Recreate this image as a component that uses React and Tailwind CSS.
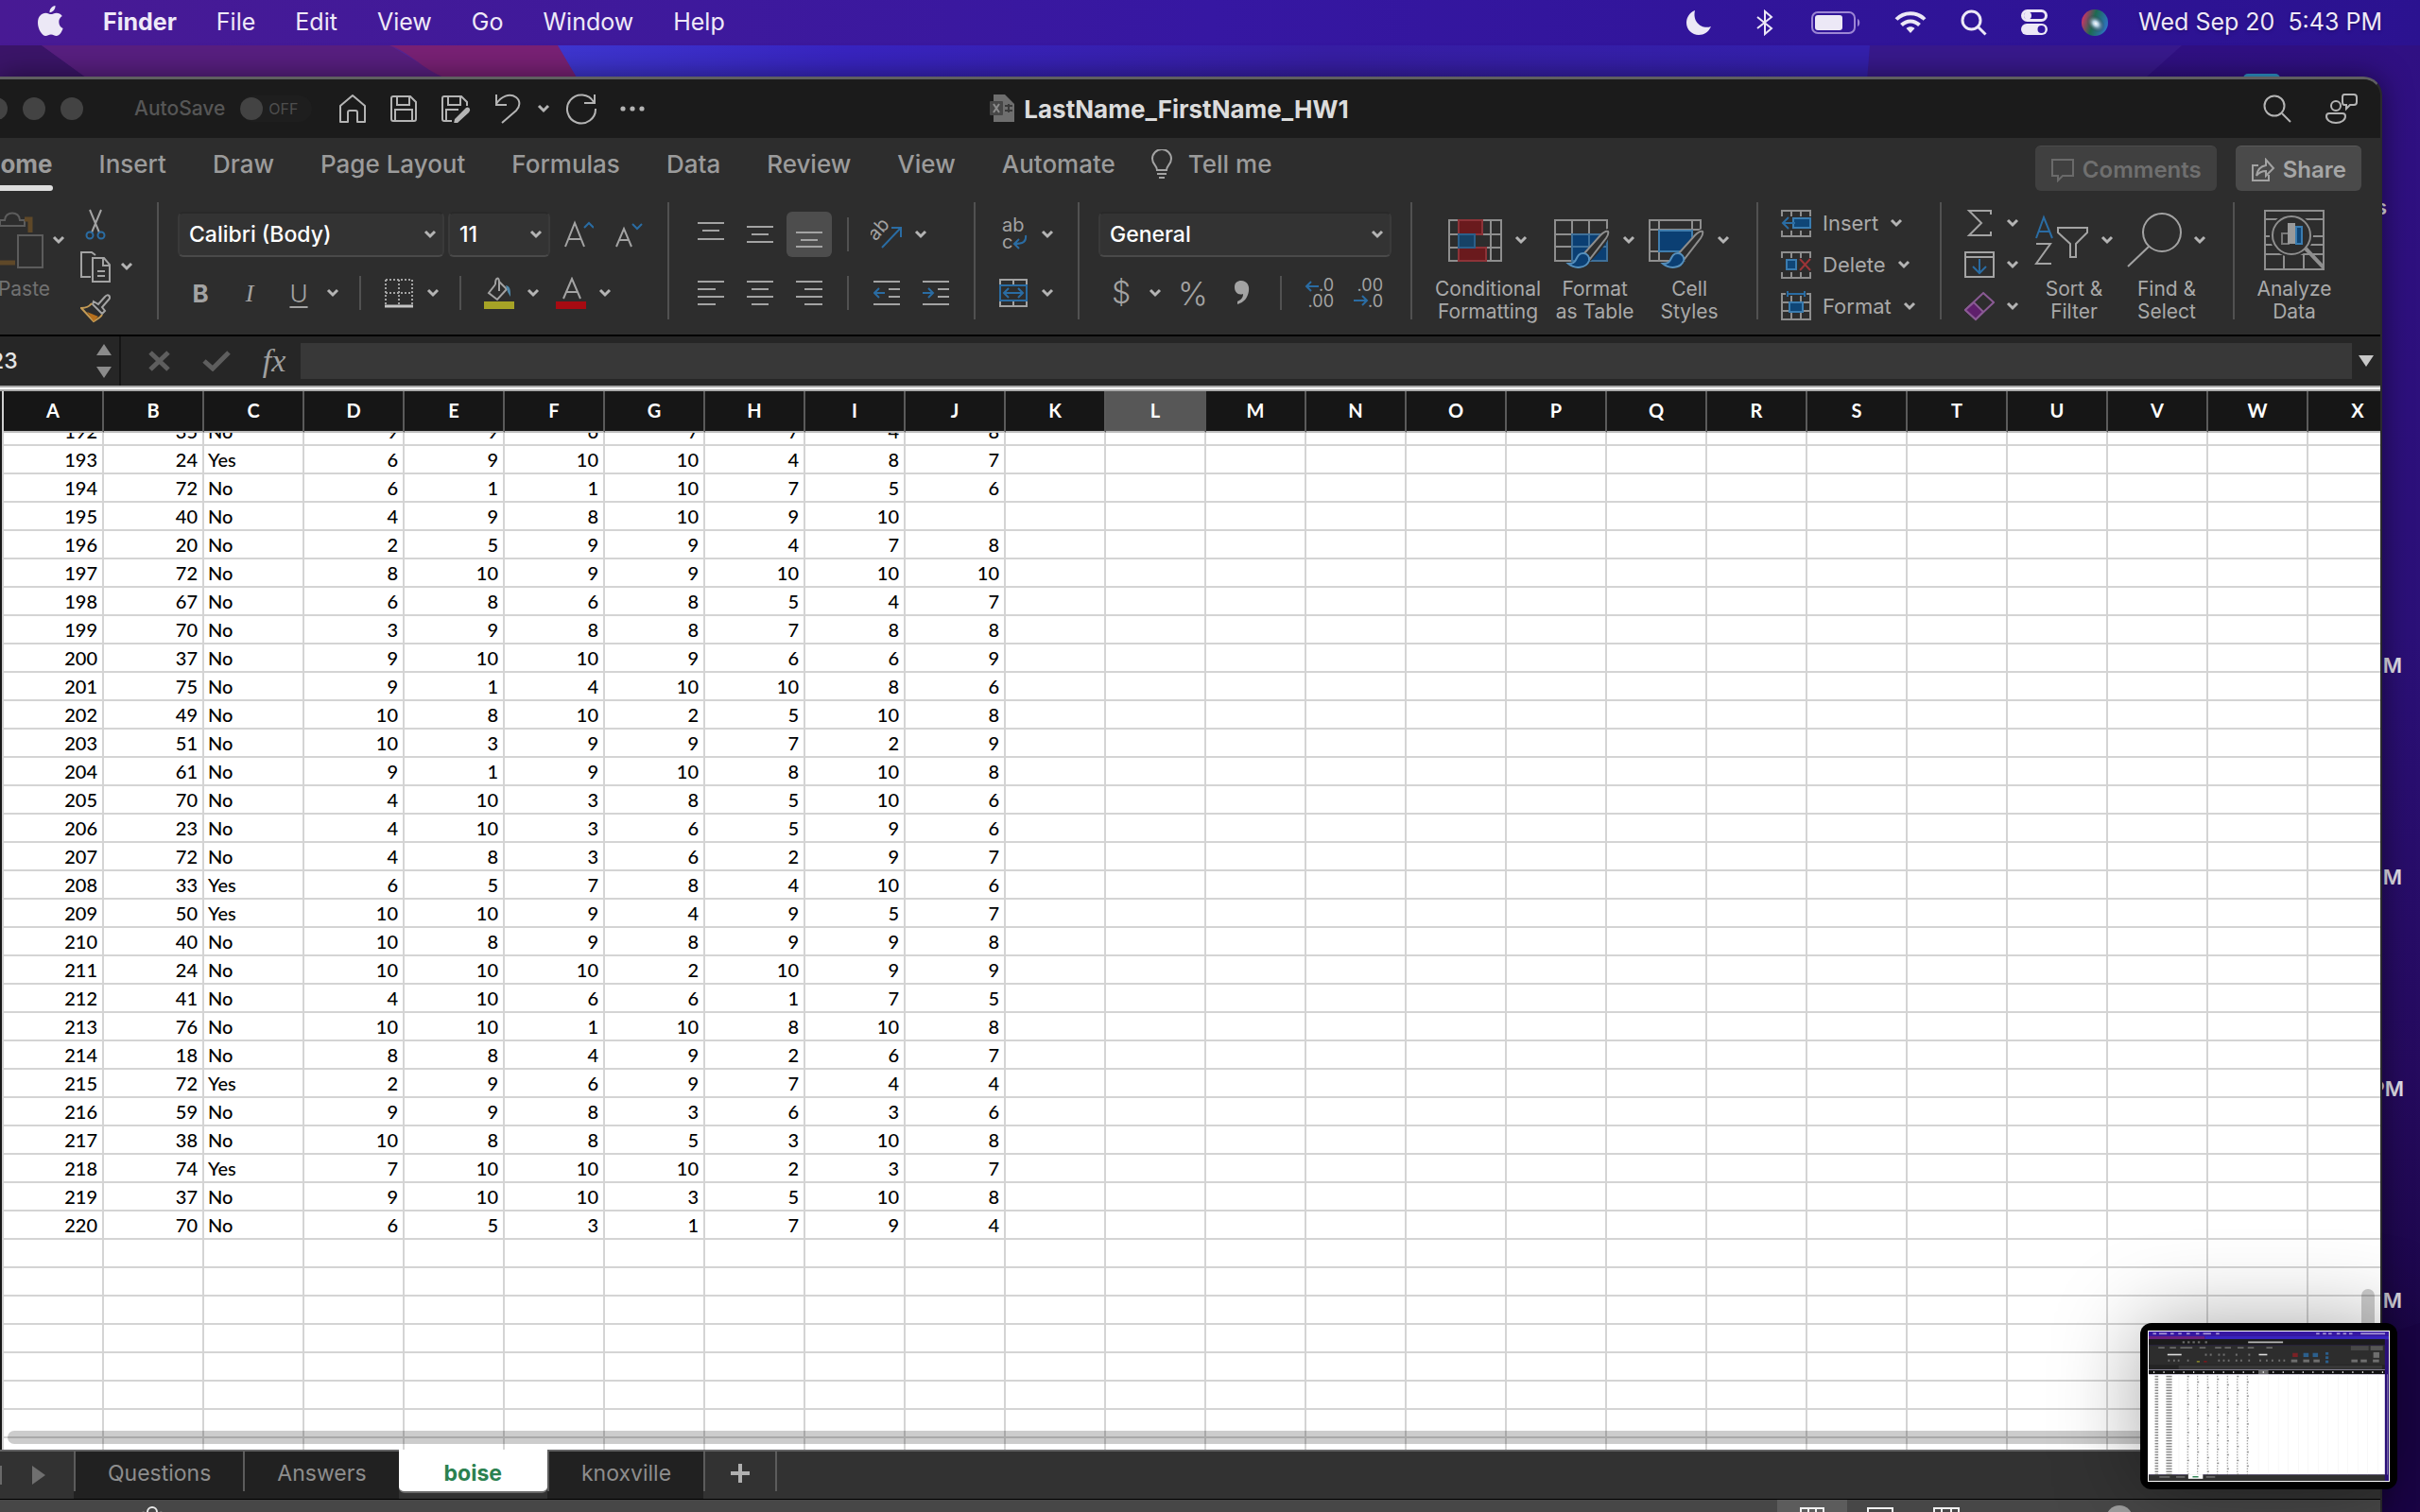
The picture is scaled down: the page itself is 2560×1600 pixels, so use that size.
import { useState } from "react";
import clsx from "clsx";

const COLUMNS = "ABCDEFGHIJKLMNOPQRSTUVWX".split("");

const ROWS = [
  [192, 35, "No", 9, 9, 6, 7, 7, 4, 8],
  [193, 24, "Yes", 6, 9, 10, 10, 4, 8, 7],
  [194, 72, "No", 6, 1, 1, 10, 7, 5, 6],
  [195, 40, "No", 4, 9, 8, 10, 9, 10, ""],
  [196, 20, "No", 2, 5, 9, 9, 4, 7, 8],
  [197, 72, "No", 8, 10, 9, 9, 10, 10, 10],
  [198, 67, "No", 6, 8, 6, 8, 5, 4, 7],
  [199, 70, "No", 3, 9, 8, 8, 7, 8, 8],
  [200, 37, "No", 9, 10, 10, 9, 6, 6, 9],
  [201, 75, "No", 9, 1, 4, 10, 10, 8, 6],
  [202, 49, "No", 10, 8, 10, 2, 5, 10, 8],
  [203, 51, "No", 10, 3, 9, 9, 7, 2, 9],
  [204, 61, "No", 9, 1, 9, 10, 8, 10, 8],
  [205, 70, "No", 4, 10, 3, 8, 5, 10, 6],
  [206, 23, "No", 4, 10, 3, 6, 5, 9, 6],
  [207, 72, "No", 4, 8, 3, 6, 2, 9, 7],
  [208, 33, "Yes", 6, 5, 7, 8, 4, 10, 6],
  [209, 50, "Yes", 10, 10, 9, 4, 9, 5, 7],
  [210, 40, "No", 10, 8, 9, 8, 9, 9, 8],
  [211, 24, "No", 10, 10, 10, 2, 10, 9, 9],
  [212, 41, "No", 4, 10, 6, 6, 1, 7, 5],
  [213, 76, "No", 10, 10, 1, 10, 8, 10, 8],
  [214, 18, "No", 8, 8, 4, 9, 2, 6, 7],
  [215, 72, "Yes", 2, 9, 6, 9, 7, 4, 4],
  [216, 59, "No", 9, 9, 8, 3, 6, 3, 6],
  [217, 38, "No", 10, 8, 8, 5, 3, 10, 8],
  [218, 74, "Yes", 7, 10, 10, 10, 2, 3, 7],
  [219, 37, "No", 9, 10, 10, 3, 5, 10, 8],
  [220, 70, "No", 6, 5, 3, 1, 7, 9, 4],
  [], [], [], [], [], [], [], [],
];

const BLUE = "#2a6ca3";

function Svg({ w, h, children, className, ...rest }) {
  return (
    <svg
      width={w}
      height={h}
      viewBox={`0 0 ${w} ${h}`}
      fill="none"
      stroke="#a3a3a3"
      strokeWidth="2"
      className={clsx("shrink-0", className)}
      aria-hidden="true"
      {...rest}
    >
      {children}
    </svg>
  );
}

function Chevron() {
  return (
    <Svg w={14} h={10} stroke="#b4b4b4" strokeWidth="3">
      <path d="M2 2l5 5 5-5" />
    </Svg>
  );
}

/* ---------- macOS menu bar ---------- */

function MenuBar() {
  return (
    <header className="flex h-12 items-center justify-between bg-linear-to-r from-[#481a94] via-[#3617a2] to-[#2b1290] px-10 text-[25px] text-[#efe9f8] text-shadow-md">
      <nav className="flex items-center gap-[42px]">
        <button aria-label="Apple" className="-mt-1">
          <Svg w={27} h={32} stroke="none" fill="#ece8f6">
            <path d="M18.500 0c.3 3.600-2.600 7.200-6 7.200C12 3.700 15.200.5 18.500 0z" />
            <path d="M22.300 17c0-3 1.500-4.800 3.500-6.100-1.500-2.200-3.800-3.200-6-3.200-2.600 0-4.300 1.400-5.800 1.400-1.600 0-3.300-1.400-5.600-1.400C4 7.700 0 11.300 0 18c0 6.800 4.500 14 8.300 14 2 0 3.300-1.400 5.700-1.400s3.500 1.400 5.600 1.400c3.200 0 5.800-4.300 7-8-2.500-1-4.300-3.500-4.300-7z" />
          </Svg>
        </button>
        <button className="font-bold">Finder</button>
        <button>File</button>
        <button>Edit</button>
        <button>View</button>
        <button>Go</button>
        <button>Window</button>
        <button>Help</button>
      </nav>
      <div className="flex items-center">
        <button aria-label="Focus" className="mr-12">
          <Svg w={26} h={26} stroke="none" fill="#ece8f6">
            <path d="M9 0C3 2.500 0 7.500 0 13c0 7.500 6 13 13 13 5.500 0 10.500-3 13-9-9 3.500-20-4-17-17z" />
          </Svg>
        </button>
        <button aria-label="Bluetooth" className="mr-10">
          <Svg w={18} h={28} stroke="#ece8f6">
            <path d="M1 8l15 12-7 6V2l7 6L1 20" />
          </Svg>
        </button>
        <button aria-label="Battery" className="mr-9">
          <Svg w={52} h={24} stroke="#9c86d4">
            <rect x="1" y="1" width="45" height="22" rx="6" />
            <rect x="4" y="4" width="29" height="16" rx="3" fill="#ece8f6" stroke="none" />
            <path d="M49 8c3 1 3 7 0 8z" fill="#9c86d4" stroke="none" />
          </Svg>
        </button>
        <button aria-label="Wi-Fi" className="mr-9">
          <Svg w={34} h={24} stroke="#ece8f6" strokeWidth="4">
            <path d="M2 8.500C10 0 24 0 32 8.500M7.500 14.500c5.500-5.500 13.500-5.500 19 0" />
            <path d="M17 23l-4.500-5c2.500-2.500 6.500-2.500 9 0z" fill="#ece8f6" stroke="none" />
          </Svg>
        </button>
        <button aria-label="Spotlight" className="mr-9">
          <Svg w={28} h={28} stroke="#ece8f6" strokeWidth="3">
            <circle cx="11.500" cy="11.500" r="9.500" />
            <path d="M18.500 18.500l8 8" />
          </Svg>
        </button>
        <button aria-label="Control Center" className="mr-9">
          <Svg w={28} h={28} stroke="#ece8f6">
            <rect x="1.500" y="1.500" width="25" height="10" rx="5" strokeWidth="3" />
            <circle cx="7" cy="6.500" r="4" fill="#ece8f6" stroke="none" />
            <rect x="0" y="15" width="28" height="12" rx="6" fill="#ece8f6" stroke="none" />
            <circle cx="21.500" cy="21" r="4" fill="#3216a0" stroke="none" />
          </Svg>
        </button>
        <button aria-label="Siri" className="mr-8">
          <Svg w={28} h={28} stroke="none">
            <defs>
              <radialGradient id="siri">
                <stop offset="0" stopColor="#fff" />
                <stop offset="0.300" stopColor="#bfd8ec" stopOpacity="0.900" />
                <stop offset="1" stopColor="#223" stopOpacity="0" />
              </radialGradient>
              <linearGradient id="siriRing" x1="0" y1="0.300" x2="1" y2="0.600">
                <stop offset="0" stopColor="#d8306a" />
                <stop offset="0.450" stopColor="#1d6a50" />
                <stop offset="1" stopColor="#2f74c8" />
              </linearGradient>
            </defs>
            <circle cx="14" cy="14" r="14" fill="url(#siriRing)" />
            <ellipse cx="15" cy="15" rx="11" ry="8" fill="url(#siri)" transform="rotate(40 15 15)" />
          </Svg>
        </button>
        <time className="whitespace-pre">Wed Sep 20  5:43 PM</time>
      </div>
    </header>
  );
}

/* ---------- Excel title bar ---------- */

function TitleBar() {
  return (
    <div className="flex h-[62px] items-center justify-between bg-[#1b1b1b] pr-6">
      <div className="flex flex-1 items-center">
        <div className="-ml-4 flex gap-4">
          <span className="size-6 rounded-full bg-[#434343]" />
          <span className="size-6 rounded-full bg-[#434343]" />
          <span className="size-6 rounded-full bg-[#434343]" />
        </div>
        <label htmlFor="autosave" className="ml-[54px] text-[21px] font-medium text-[#565656]">
          AutoSave
        </label>
        <button
          id="autosave"
          role="switch"
          aria-checked="false"
          className="ml-4 flex h-7 w-[76px] items-center gap-1.5 rounded-full bg-[#1e1e1e] text-base text-[#4e4e4e]"
        >
          <span className="size-6 rounded-full bg-[#434343]" />
          OFF
        </button>
        <button aria-label="Home" className="ml-7">
          <Svg w={30} h={32} stroke="#b4b4b4">
            <path d="M2 13L15 2l13 11v17h-8V20q0-2-2-2h-6q-2 0-2 2v10H2z" strokeLinejoin="round" />
          </Svg>
        </button>
        <button aria-label="Save" className="ml-6">
          <Svg w={30} h={30} stroke="#b4b4b4">
            <path d="M4 2h18l6 6v18q0 2-2 2H4q-2 0-2-2V4q0-2 2-2z" />
            <path d="M8 2v9h13V2M6 28V16h18v12" />
          </Svg>
        </button>
        <button aria-label="Save as" className="ml-6">
          <Svg w={32} h={30} stroke="#b4b4b4">
            <path d="M12 28H4q-2 0-2-2V4q0-2 2-2h18l6 6v4M8 2v9h13V2M6 28V16h13" />
            <path d="M30 14c2 2 1 3 0 5L18 30l-4 1 1-5 12-12q1.500-1 3 0z" fill="#b4b4b4" stroke="none" />
          </Svg>
        </button>
        <button aria-label="Undo" className="ml-6">
          <Svg w={30} h={34} stroke="#b4b4b4">
            <path d="M3 2v11h11M3 12C8 4 17 0 24 5c5 4 4 10 0 14L9 32" />
          </Svg>
        </button>
        <button aria-label="Undo history" className="ml-4">
          <Chevron />
        </button>
        <button aria-label="Redo" className="ml-4">
          <Svg w={34} h={34} stroke="#b4b4b4">
            <path d="M31 2v9H20M30 10A15 15 0 1 0 32 17" />
          </Svg>
        </button>
        <button aria-label="More" className="ml-6">
          <Svg w={28} h={6} fill="#b4b4b4" stroke="none">
            <circle cx="3" cy="3" r="2.600" />
            <circle cx="13" cy="3" r="2.600" />
            <circle cx="23" cy="3" r="2.600" />
          </Svg>
        </button>
      </div>
      <h1 className="mr-5 flex items-center gap-2.5 text-[26px] font-bold text-[#dcdcdc]">
        <Svg w={26} h={30} stroke="none">
          <path d="M4 0h12l10 10v19H4z" fill="#6e6e6e" />
          <path d="M16 12h8M16 17h8M20 10v9" stroke="#3a3a3a" />
          <rect x="0" y="7" width="14" height="15" rx="1" fill="#474747" />
          <path d="M4 10l6 9M10 10l-6 9" stroke="#8b8b8b" />
        </Svg>
        LastName_FirstName_HW1
      </h1>
      <div className="flex flex-1 items-center justify-end gap-9">
        <button aria-label="Search">
          <Svg w={30} h={30} stroke="#b4b4b4">
            <circle cx="12" cy="12" r="10.500" />
            <path d="M20 20l9 9" />
          </Svg>
        </button>
        <button aria-label="Collaborate">
          <Svg w={34} h={32} stroke="#b4b4b4">
            <circle cx="11" cy="13" r="5" />
            <path d="M4 21h14q3 0 3 3c0 4-4 7-10 7S1 28 1 24q0-3 3-3z" />
            <path d="M20 1h10q3 0 3 3v5q0 3-3 3h-4l-4 4v-4h-2q-2 0-2-3V4q0-3 2-3z" />
          </Svg>
        </button>
      </div>
    </div>
  );
}

/* ---------- ribbon ---------- */

const TABS = ["Insert", "Draw", "Page Layout", "Formulas", "Data", "Review", "View", "Automate"];

function RibbonTabs() {
  return (
    <div className="flex h-[68px] items-start justify-between pr-5 font-medium text-[#9b9b9b]">
      <nav className="-ml-[19px] flex gap-[49px] pt-3 text-[26px] leading-8">
        <button className="flex h-11 flex-col justify-between font-bold">
          Home
          <span className="h-1.5 w-full rounded-full bg-[#dedede]" />
        </button>
        {TABS.map((tab) => (
          <button key={tab} className="h-8">{tab}</button>
        ))}
        <button className="-ml-3 flex h-8 items-center gap-4">
          <Svg w={24} h={32}>
            <path d="M7 22c0-5-5-6-5-12a9.500 9.500 0 0 1 20 0c0 6-5 7-5 12zM7 26h10M9 30h6" />
          </Svg>
          Tell me
        </button>
      </nav>
      <div className="flex gap-5 pt-2 text-2xl font-semibold">
        <button className="flex h-12 items-center gap-2 rounded-md border-t border-[#4b4b4b] bg-[#404040] px-4 pt-0.5 text-[#6f6f6f]">
          <Svg w={26} h={26} stroke="#6a6a6a">
            <path d="M2 2h22v17H13l-5 5v-5H2z" />
          </Svg>
          Comments
        </button>
        <button className="flex h-12 items-center gap-2 rounded-md border-t border-[#5a5a5a] bg-[#4a4a4a] px-4 pt-0.5 text-[#a6a6a6]">
          <Svg w={26} h={26}>
            <path d="M8 8H2v16h17v-6M6 19C7 12 10 9 16 8V2l8 9-8 8v-5c-4 0-7 1-10 5z" />
          </Svg>
          Share
        </button>
      </div>
    </div>
  );
}

function Group({ className, children }) {
  return <div className={clsx("h-[124px] shrink-0 border-l-2 border-[#515151]", className)}>{children}</div>;
}

function Tool({ label, children, menu, active }) {
  return (
    <>
      <button aria-label={label} className="flex h-12 w-13 items-center justify-center">
        <span className={clsx("flex h-12 w-12 items-center justify-center rounded-md", active && "bg-[#4d4d4d]")}>
          {children}
        </span>
      </button>
      {menu && (
        <button aria-label={`${label} options`} className="mr-1 flex h-12 w-5 items-center justify-center">
          <Chevron />
        </button>
      )}
    </>
  );
}

function Divider() {
  return <span className="mx-3.5 h-9 w-0.5 bg-[#515151]" />;
}

function Combo({ label, value, className }) {
  return (
    <div className={clsx("relative h-12 rounded-md border-2 border-x-[#3a3a3a] border-t-[#292929] border-b-[#4a4a4a] bg-[#333]", className)}>
      <select
        aria-label={label}
        defaultValue={value}
        className="h-full w-full appearance-none pl-2.5 text-[23px] font-medium text-white outline-none"
      >
        <option>{value}</option>
      </select>
      <span className="pointer-events-none absolute inset-y-0 right-1.5 flex items-center">
        <Chevron />
      </span>
    </div>
  );
}

function AlignLines({ lines }) {
  return (
    <Svg w={28} h={28}>
      {lines.map(([x1, x2, y]) => (
        <path key={y} d={`M${x1} ${y}H${x2}`} />
      ))}
    </Svg>
  );
}

function BigButton({ label, icon, menu = true }) {
  return (
    <button className="flex min-w-[84px] flex-col items-center text-[21px] leading-6 text-[#a9a9a9]">
      <span className="flex h-20 shrink-0 items-center gap-3">
        {icon}
        {menu && <Chevron />}
      </span>
      {label.map((line) => (
        <span key={line} className="shrink-0">{line}</span>
      ))}
    </button>
  );
}

function PaintBrush() {
  return (
    <>
      <path d="M57 20c-4 0-11 9-25 26l-6 4 8 8 6-5C54 38 62 28 57 20z" fill="#2d2d2d" stroke="none" />
      <path d="M57 23c-2-1-5 1-8 4L32 46l6 6 17-22c2-3 3-5 2-7z" fill="#2d2d2d" />
      <path d="M31 46c-5 0-6 3-8 7-1 3-4 4-8 4 7 6 19 5 22-3 1-4-2-8-6-8z" fill="#0b3f73" stroke="#5590bd" />
    </>
  );
}

function CellsIcon({ kind }) {
  return (
    <Svg w={32} h={32} stroke="#8e8e8e">
      <path d="M1 3h30v27H1zM11 3v27M21 3v27M1 12h30M1 21h30" />
      {kind === "Insert" && (
        <>
          <path d="M0 9h32v15H0z" fill="#2d2d2d" stroke="none" />
          <path d="M13 11h18v10H13z" fill="#0f4677" stroke="#3a7cb0" />
          <path d="M15 16H2m6-6l-6 6 6 6" stroke={BLUE} />
        </>
      )}
      {kind === "Delete" && (
        <>
          <path d="M0 9h32v15H0z" fill="#2d2d2d" stroke="none" />
          <path d="M6 11h10v10H6z" fill="#0f4677" stroke="#3a7cb0" />
          <path d="M20 10l11 12M31 10L20 22" stroke="#9c3437" />
        </>
      )}
      {kind === "Format" && (
        <>
          <path d="M5 0h22v5H5z" fill="#2d2d2d" stroke="none" />
          <path d="M7 0v6M25 0v6M7 3h18" stroke={BLUE} />
          <path d="M9 12h14v10H9z" fill="#0f4677" stroke="#3a7cb0" />
        </>
      )}
    </Svg>
  );
}

function Ribbon() {
  return (
    <div className="flex h-[140px] items-start">
      {/* clipboard */}
      <div className="flex h-[124px] w-[166px] shrink-0">
        <button className="-ml-1 flex w-[59px] flex-col text-[21px] text-[#717171]">
          <span className="flex h-20 items-center">
            <Svg w={50} h={62} stroke="#5c5c5c">
              <path d="M4 16v-6h5c0-10 16-10 16 0h5v6z" />
              <path d="M30 9h6v14" stroke="#5f4828" strokeWidth="5" />
              <path d="M0 55h20" stroke="#5f4828" strokeWidth="5" />
              <path d="M23 26h26v34H23z" />
            </Svg>
          </span>
          <span className="leading-6">Paste</span>
        </button>
        <button aria-label="Paste options" className="flex h-20 w-4 items-center">
          <Chevron />
        </button>
        <div className="ml-3.5 flex flex-col gap-2 pt-1.5">
          <button aria-label="Cut" className="flex h-9 w-8 shrink-0 items-center justify-center">
            <Svg w={24} h={34}>
              <path d="M6 1l10 24M18 1L8 25" />
              <circle cx="6" cy="28" r="3.500" stroke={BLUE} />
              <circle cx="18" cy="28" r="3.500" stroke={BLUE} />
            </Svg>
          </button>
          <button aria-label="Copy" className="flex h-9 w-14 shrink-0 items-center justify-between">
            <Svg w={32} h={34}>
              <path d="M11 28H1V2h11l4 3" />
              <path d="M13 8h12l6 7v18H13zM24 8v8h7M18 22h8M18 27h8" />
            </Svg>
            <Chevron />
          </button>
          <button aria-label="Format painter" className="flex h-9 w-8 shrink-0 items-center justify-center">
            <Svg w={32} h={32}>
              <path d="M14 9l5 3 7-8c3-4 7 0 4 3l-7 8 3 4-3 3L13 12z" />
              <path d="M12 11C9 15 5 16 1 16l13 14c4-2 7-4 9-7" stroke="#c39a55" />
              <path d="M7 20l12 5-5 5z" fill="#b8701c" stroke="none" />
            </Svg>
          </button>
        </div>
      </div>

      {/* font */}
      <Group className="flex w-[540px] flex-col gap-3.5 pt-2.5 pl-[18px]">
        <div className="flex items-center px-0.5">
          <Combo label="Font" value="Calibri (Body)" className="w-[282px]" />
          <Combo label="Font size" value="11" className="mx-1 w-[108px]" />
          <Tool label="Increase font size">
            <Svg w={32} h={30}>
              <path d="M2 28L12 3l10 25M6 20h12" />
              <path d="M22 8l5-5 5 5" stroke={BLUE} />
            </Svg>
          </Tool>
          <Tool label="Decrease font size">
            <Svg w={32} h={30}>
              <path d="M4 28l8-19 8 19M7 21h10" />
              <path d="M21 4l5 5 5-5" stroke={BLUE} />
            </Svg>
          </Tool>
        </div>
        <div className="flex items-center text-[26px] text-[#a3a3a3]">
          <Tool label="Bold"><b>B</b></Tool>
          <Tool label="Italic"><i className="font-[Liberation_Serif]">I</i></Tool>
          <Tool label="Underline" menu><u className="font-light underline-offset-4">U</u></Tool>
          <Divider />
          <Tool label="Borders" menu>
            <Svg w={32} h={32}>
              <path d="M2 2h28M2 16h28M2 2v26M16 2v26M30 2v26" strokeDasharray="2 2" />
              <path d="M1 30h30" strokeWidth="3" stroke="#c4c4c4" />
            </Svg>
          </Tool>
          <Divider />
          <Tool label="Fill color" menu>
            <Svg w={32} h={34}>
              <path d="M12 8L5 17l9 7 10-11L16 5v10M12 8c0-8 4-8 4-3" />
              <path d="M23 9c5 1 5 5 5 12l-3-5z" fill="#4f87a8" stroke="none" />
              <path d="M0 26h32v8H0z" fill="#a6a326" stroke="none" />
            </Svg>
          </Tool>
          <Tool label="Font color" menu>
            <Svg w={32} h={34}>
              <path d="M8 23l9-21 9 21M11 16h12" />
              <path d="M0 26h32v8H0z" fill="#a70b12" stroke="none" />
            </Svg>
          </Tool>
        </div>
      </Group>

      {/* alignment */}
      <Group className="flex w-[324px] flex-col gap-3.5 pt-2.5 pl-[18px]">
        <div className="flex items-center">
          <Tool label="Top align"><AlignLines lines={[[0, 28, 2], [5, 23, 10], [0, 28, 19]]} /></Tool>
          <Tool label="Middle align"><AlignLines lines={[[0, 28, 6], [5, 23, 14], [0, 28, 22]]} /></Tool>
          <Tool label="Bottom align" active><AlignLines lines={[[0, 28, 12], [5, 23, 20], [0, 28, 27]]} /></Tool>
          <Divider />
          <Tool label="Orientation" menu>
            <Svg w={34} h={32} strokeWidth="0">
              <text x="0" y="18" fill="#a3a3a3" fontSize="20" transform="rotate(-48 9 15)">ab</text>
              <path d="M12 30L32 9M22 9h10v10" stroke={BLUE} strokeWidth="2" />
            </Svg>
          </Tool>
        </div>
        <div className="flex items-center">
          <Tool label="Align left"><AlignLines lines={[[0, 28, 2], [0, 19, 10], [0, 28, 18], [0, 19, 26]]} /></Tool>
          <Tool label="Center"><AlignLines lines={[[0, 28, 2], [5, 23, 10], [0, 28, 18], [5, 23, 26]]} /></Tool>
          <Tool label="Align right"><AlignLines lines={[[0, 28, 2], [9, 28, 10], [0, 28, 18], [9, 28, 26]]} /></Tool>
          <Divider />
          <Tool label="Decrease indent">
            <Svg w={28} h={28}>
              <path d="M0 2h28M16 10h12M16 18h12M0 26h28" />
              <path d="M12 14H1m5-5l-5 5 5 5" stroke={BLUE} />
            </Svg>
          </Tool>
          <Tool label="Increase indent">
            <Svg w={28} h={28}>
              <path d="M0 2h28M16 10h12M16 18h12M0 26h28" />
              <path d="M0 14h11m-5-5l5 5-5 5" stroke={BLUE} />
            </Svg>
          </Tool>
        </div>
      </Group>

      {/* wrap and merge */}
      <Group className="flex w-[110px] flex-col gap-3.5 pt-2.5 pl-3.5">
        <div className="flex items-center">
          <Tool label="Wrap text" menu>
            <Svg w={30} h={36} stroke="none">
              <text x="3" y="15" fill="#a3a3a3" fontSize="20">ab</text>
              <text x="3" y="33" fill="#a3a3a3" fontSize="20">c</text>
              <path d="M28 19c1 7-3 9-12 9m5-5l-5 5 5 5" stroke={BLUE} strokeWidth="2" fill="none" />
            </Svg>
          </Tool>
        </div>
        <div className="flex items-center">
          <Tool label="Merge cells" menu>
            <Svg w={30} h={30}>
              <path d="M1 1h28v28H1zM15 1v28" />
              <path d="M1 7h28v16H1z" fill="#2d2d2d" stroke={BLUE} />
              <path d="M5 15h20M10 10l-5 5 5 5M20 10l5 5-5 5" stroke={BLUE} />
            </Svg>
          </Tool>
        </div>
      </Group>

      {/* number */}
      <Group className="flex w-[352px] flex-col gap-3.5 pt-2.5 pl-[18px]">
        <div className="flex items-center px-0.5">
          <Combo label="Number format" value="General" className="w-[310px]" />
        </div>
        <div className="flex items-center text-[#a3a3a3]">
          <Tool label="Currency" menu><span className="text-[32px] font-light">$</span></Tool>
          <Tool label="Percent"><span className="text-[34px] font-light">%</span></Tool>
          <Tool label="Comma style">
            <Svg w={16} h={26} stroke="none" fill="#a3a3a3">
              <path d="M7 0c6 0 9 5 8 11-1 7-5 12-12 14v-3c4-2 6-4 6-8-5 2-9-2-9-7s3-7 7-7z" />
            </Svg>
          </Tool>
          <Divider />
          <Tool label="Increase decimal">
            <Svg w={32} h={34} stroke="none">
              <text x="31" y="15" textAnchor="end" fill="#a3a3a3" fontSize="18">.0</text>
              <text x="31" y="32" textAnchor="end" fill="#a3a3a3" fontSize="18">.00</text>
              <path d="M15 10H2m5-5l-5 5 5 5" stroke={BLUE} />
            </Svg>
          </Tool>
          <Tool label="Decrease decimal">
            <Svg w={32} h={34} stroke="none">
              <text x="31" y="15" textAnchor="end" fill="#a3a3a3" fontSize="18">.00</text>
              <text x="31" y="32" textAnchor="end" fill="#a3a3a3" fontSize="18">.0</text>
              <path d="M0 25h14m-5-5l5 5-5 5" stroke={BLUE} />
            </Svg>
          </Tool>
        </div>
      </Group>

      {/* styles */}
      <Group className="flex w-[366px] gap-3.5 pl-6">
        <BigButton
          label={["Conditional", "Formatting"]}
          icon={
            <Svg w={58} h={48} stroke="#8e8e8e">
              <path d="M1 3h55v43H1zM11 3v43M45 3v43M1 18h55M1 32h55" />
              <path d="M29 19h15v12H29z" fill="#2d2d2d" stroke="none" />
              <path d="M11 3h25v15H11zM11 32h29v14H11z" fill="#6a1a1d" stroke="#8d3338" />
              <path d="M11 18h17v14H11z" fill="#164266" stroke="#2b5f8a" />
            </Svg>
          }
        />
        <BigButton
          label={["Format", "as Table"]}
          icon={
            <Svg w={60} h={64} stroke="#8e8e8e">
              <path d="M1 11h55v43H1zM19 11v43M37 11v43M1 26h55M1 39h55" />
              <path d="M19 26h37v28H19z" fill="#0b3f73" stroke="#3f7099" />
              <path d="M37 26v28M19 39h37" stroke="#3f7099" />
              <PaintBrush />
            </Svg>
          }
        />
        <BigButton
          label={["Cell", "Styles"]}
          icon={
            <Svg w={60} h={64} stroke="#8e8e8e">
              <path d="M55 22V11H1v43h54M11 11v43M46 11v10M1 21h54M1 44h30" />
              <path d="M46 30h12v26H38z" fill="#2d2d2d" stroke="none" />
              <path d="M11 22h35v22H11z" fill="#0b3f73" stroke="#3f7dad" />
              <PaintBrush />
            </Svg>
          }
        />
      </Group>

      {/* cells */}
      <Group className="flex w-[194px] flex-col gap-1 pt-0.5 pl-6 text-[22px] text-[#a9a9a9]">
        {["Insert", "Delete", "Format"].map((kind) => (
          <button key={kind} className="flex h-10 shrink-0 items-center gap-3">
            <CellsIcon kind={kind} />
            {kind}
            <Chevron />
          </button>
        ))}
      </Group>

      {/* editing */}
      <Group className="flex w-[310px] pl-6">
        <div className="flex w-[58px] flex-col gap-1 pt-0.5">
          <button aria-label="AutoSum" className="flex h-10 shrink-0 items-center justify-between">
            <Svg w={32} h={28}>
              <path d="M28 5V1H5l13 13L5 27h23v-4" />
            </Svg>
            <Chevron />
          </button>
          <button aria-label="Fill" className="flex h-10 shrink-0 items-center justify-between">
            <Svg w={32} h={28}>
              <path d="M1 1h30v26H1zM1 6h30" />
              <path d="M16 8v14m-7-6l7 7 7-7" stroke={BLUE} />
            </Svg>
            <Chevron />
          </button>
          <button aria-label="Clear" className="flex h-10 shrink-0 items-center justify-between">
            <Svg w={32} h={32} stroke="#8a5a94">
              <path d="M20 2l11 10-19 18L1 20z" />
              <path d="M10 12L1 20l11 10 8-8z" fill="#5f1f6c" />
            </Svg>
            <Chevron />
          </button>
        </div>
        <div className="flex gap-3.5 pl-4">
          <BigButton
            label={["Sort &", "Filter"]}
            icon={
              <Svg w={58} h={56}>
                <path d="M2 26L10 4l9 22M5 19h11" stroke={BLUE} />
                <path d="M2 32h15L2 53h16" />
                <path d="M25 15h31v5L44 32v14h-6V32L25 20z" />
              </Svg>
            }
          />
          <BigButton
            label={["Find &", "Select"]}
            icon={
              <Svg w={58} h={60}>
                <circle cx="37" cy="22" r="20" />
                <path d="M23 37L1 58" />
              </Svg>
            }
          />
        </div>
      </Group>

      {/* analysis */}
      <Group className="flex flex-1 justify-center pr-7">
        <BigButton
          label={["Analyze", "Data"]}
          menu={false}
          icon={
            <Svg w={64} h={66} stroke="#8e8e8e">
              <path d="M1 2h62v62H1zM1 11h62M1 29h62M1 38h62M1 48h62M21 48v16M42 48v16" />
              <circle cx="29" cy="28" r="23" fill="#2d2d2d" stroke="none" />
              <circle cx="29" cy="28" r="20" fill="#2d2d2d" />
              <path d="M44 42l19 20" strokeWidth="4" />
              <path d="M19 26h7v11h-7z" stroke="#777" />
              <path d="M25 15h8v22h-8z" fill="#9a9a9a" stroke="none" />
              <path d="M34 19h6v18h-6z" fill="#0f4677" stroke="#3a7cb0" />
            </Svg>
          }
        />
      </Group>
    </div>
  );
}

/* ---------- formula bar ---------- */

function FormulaBar() {
  return (
    <div className="flex h-[54px] items-center border-t-2 border-black bg-[#262626]">
      <div className="flex h-full w-32 items-center justify-between border-r-2 border-[#161616] pr-2">
        <input
          aria-label="Name box"
          defaultValue="23"
          className="-ml-2.5 w-16 text-[23px] font-medium text-[#e4e4e4] outline-none"
        />
        <Svg w={16} h={38} fill="#8b8b8b" stroke="none">
          <path d="M8 1l8 12H0zM8 37l8-12H0z" />
        </Svg>
      </div>
      <button aria-label="Cancel" className="ml-7">
        <Svg w={26} h={22} stroke="#5e5e5e" strokeWidth="5">
          <path d="M3 2l19 18M22 2L3 20" />
        </Svg>
      </button>
      <button aria-label="Enter" className="ml-8">
        <Svg w={30} h={22} stroke="#5e5e5e" strokeWidth="5">
          <path d="M2 11l9 8L28 2" />
        </Svg>
      </button>
      <button aria-label="Insert function" className="ml-7 w-9 font-[Liberation_Serif] text-[34px] leading-9 text-[#a0a0a0] italic">
        fx
      </button>
      <input aria-label="Formula" className="ml-2.5 h-[38px] min-w-0 flex-1 bg-[#383838] px-2 text-xl text-white outline-none" />
      <button aria-label="Expand formula bar" className="flex w-[30px] justify-center">
        <Svg w={16} h={12} fill="#c8c8c8" stroke="none">
          <path d="M0 0h16L8 12z" />
        </Svg>
      </button>
    </div>
  );
}

/* ---------- sheet ---------- */

function Sheet() {
  return (
    <div className="relative min-h-0 flex-1 overflow-hidden border-l-2 border-[#161616] bg-white">
      <table className="w-[2546px] table-fixed border-separate border-spacing-0 border-l-2 border-[#cfcfcf] font-[Lato] text-xl text-black">
        <thead>
          <tr>
            {COLUMNS.map((col) => (
              <th
                key={col}
                className={clsx(
                  "h-11 border-r-2 border-b-2 border-b-[#bdbdbd] p-0 pb-0.5 text-center font-bold text-white",
                  col === "L" ? "border-r-[#575757] bg-[#575757]" : "border-r-[#5a5a5a] bg-[#161616]"
                )}
              >
                {col}
              </th>
            ))}
          </tr>
        </thead>
        <tbody>
          {ROWS.map((row, r) => (
            <tr key={r}>
              {COLUMNS.map((col, c) => (
                <td key={col} className="border-r-2 border-b-2 border-[#d4d4d4] p-0">
                  {/* the first row is scrolled halfway under the header */}
                  <div
                    className={clsx(
                      "flex items-end overflow-hidden pr-[5px] pl-1 leading-7 font-medium",
                      r === 0 ? "h-3" : "h-7",
                      c === 2 ? "justify-start" : "justify-end"
                    )}
                  >
                    {row[c]}
                  </div>
                </td>
              ))}
            </tr>
          ))}
        </tbody>
      </table>
      <div className="absolute right-0 bottom-1.5 left-1.5 h-3.5 rounded-full bg-black/20" />
      <div className="absolute right-1.5 bottom-8 h-[138px] w-3.5 rounded-full bg-black/20" />
    </div>
  );
}

const SHEETS = ["Questions", "Answers", "boise", "knoxville"];

function SheetTabs() {
  const [active, setActive] = useState("boise");
  return (
    <div className="flex h-[52px] items-start border-t-2 border-[#636364] bg-[#323232] text-[23px] text-[#8d8d8d]">
      <div className="flex h-[50px] w-[78px] items-center">
        <span className="h-5 w-0.5 bg-[#6a6a6a]" />
        <button aria-label="Next sheets" className="ml-8">
          <Svg w={14} h={20} fill="#6f6f6f" stroke="none">
            <path d="M0 0l14 10L0 20z" />
          </Svg>
        </button>
      </div>
      {SHEETS.map((name) =>
        name === active ? (
          <button
            key={name}
            className="-mt-0.5 h-[46px] rounded-b-md border-b-2 border-[#6a6a6a] bg-white px-12 pt-1.5 font-bold text-[#2b8150]"
          >
            {name}
          </button>
        ) : (
          <button key={name} onClick={() => setActive(name)} className="h-[50px] bg-[#212121] pb-2">
            <span className="flex h-[42px] items-center border-l-2 border-[#5c5c5c] px-[34px] pt-1">{name}</span>
          </button>
        )
      )}
      <button aria-label="Add sheet" className="flex h-[42px] w-[78px] items-center justify-center border-x-2 border-[#5c5c5c] pt-1">
        <Svg w={20} h={20} stroke="#b0b0b0" strokeWidth="4">
          <path d="M10 0v20M0 10h20" />
        </Svg>
      </button>
    </div>
  );
}

function StatusBar() {
  return (
    <footer className="flex h-3.5 items-start justify-between overflow-hidden border-t border-black bg-[#474747] pr-[262px] pl-[148px]">
      <Svg w={26} h={14} stroke="#e8e8e8" className="mt-1.5">
        <circle cx="13" cy="7" r="5" />
        <path d="M1 9q3-3 6 1M25 9q-3-3-6 1" />
      </Svg>
      <div className="flex">
        <span className="flex w-[74px] justify-center bg-[#5c5c5c]">
          <Svg w={26} h={14} stroke="#f0f0f0" className="mt-2">
            <path d="M1 14V1h24v13M9 1v13M17 1v13" />
          </Svg>
        </span>
        <span className="flex w-[70px] justify-center">
          <Svg w={28} h={14} stroke="#f0f0f0" className="mt-2">
            <path d="M1 14V1h26v13" />
          </Svg>
        </span>
        <span className="flex w-[70px] justify-center">
          <Svg w={28} h={14} stroke="#f0f0f0" className="mt-2">
            <path d="M1 14V1h26v13M9 1v13M19 1v13" />
          </Svg>
        </span>
        <span className="mt-1.5 ml-[134px] size-7 shrink-0 rounded-full bg-[#9d9d9d]" />
      </div>
    </footer>
  );
}

/* ---------- desktop ---------- */

function Wallpaper() {
  return (
    <svg className="absolute inset-0 h-full w-full" viewBox="0 0 2560 1600" preserveAspectRatio="none" aria-hidden="true">
      <defs>
        <linearGradient id="strip">
          <stop offset="0" stopColor="#4a1b7e" />
          <stop offset="0.150" stopColor="#5c2084" />
          <stop offset="0.230" stopColor="#3e36d0" />
          <stop offset="0.350" stopColor="#3824c0" />
          <stop offset="0.550" stopColor="#371ea4" />
          <stop offset="0.750" stopColor="#3420ac" />
        </linearGradient>
        <linearGradient id="side" x1="0" y1="0" x2="0" y2="1">
          <stop offset="0" stopColor="#301083" />
          <stop offset="0.400" stopColor="#2b1078" />
          <stop offset="0.700" stopColor="#250a5e" />
          <stop offset="1" stopColor="#15043a" />
        </linearGradient>
      </defs>
      <rect width="2560" height="1600" fill="url(#strip)" />
      <path d="M0 48h44l47 34H0z" fill="#3b1569" />
      <path d="M44 48h368l58 34H91z" fill="#581f80" />
      <path d="M412 48h178l20 34H470c-25-10-35-26-58-34z" fill="#792175" />
      <path d="M1978 48h582v100h-590z" fill="#38198c" />
      <path d="M2308 48h252v1552h-60V82h-230z" fill="url(#side)" />
      <path d="M2500 1420l60-20v200h-60z" fill="#1a0446" />
      <rect x="2373" y="78" width="39" height="12" rx="5" fill="#2f9ad0" />
    </svg>
  );
}

/* labels of desktop files, mostly hidden behind the window */
function DesktopLabels() {
  return (
    <div className="absolute top-0 right-0 h-full w-[42px] overflow-hidden text-[22px] font-semibold text-[#e2e0ea]">
      <span className="absolute top-[203px] right-[35px]">s</span>
      <span className="absolute top-[688px] right-[19px]">M</span>
      <span className="absolute top-[912px] right-[19px]">M</span>
      <span className="absolute top-[1136px] right-[17px]">PM</span>
      <span className="absolute top-[1360px] right-[19px]">M</span>
    </div>
  );
}

/* miniature of the desktop that floats in the corner after a screen capture */
function CaptureThumbnail() {
  return (
    <button
      aria-label="Screen capture"
      className="absolute right-6 bottom-6 rounded-xl bg-black p-2 shadow-[0_0_90px_rgba(0,0,0,0.35)]"
    >
      <svg viewBox="0 0 2560 1600" preserveAspectRatio="none" className="h-40 w-64 border border-white" aria-hidden="true">
        <rect width="2560" height="1600" fill="#2a1078" />
        <rect width="2560" height="50" fill="#3617a2" />
        <rect y="50" width="600" height="34" fill="#6a2080" />
        <rect x="600" y="50" width="1960" height="34" fill="#3824bc" />
        <g fill="#e8e4f4" opacity="0.6">
          {[45, 110, 232, 315, 403, 503, 580, 717, 1785, 1856, 1916, 2004, 2072, 2136].map((x, i) => (
            <rect key={x} x={x} y="14" width={i === 1 || i === 6 ? 84 : 36} height="18" />
          ))}
          <rect x="2260" y="14" width="260" height="18" />
        </g>
        <rect y="82" width="2518" height="64" fill="#1b1b1b" />
        <rect x="1060" y="106" width="372" height="18" fill="#b4b4b4" />
        <rect y="146" width="2518" height="262" fill="#2d2d2d" />
        <g fill="#9b9b9b" opacity="0.6">
          {[103, 225, 337, 400, 541, 707, 811, 947, 1056, 1254].map((x) => (
            <rect key={x} x={x} y="166" width="66" height="16" />
          ))}
          {[360, 414, 468, 523, 600].map((x) => (
            <rect key={x} x={x} y="104" width="24" height="22" />
          ))}
          {[206, 262, 310, 410, 740, 792, 844, 926, 978, 1062, 1180, 1250, 1310, 1384, 1436].map((x) => (
            <rect key={x} x={x} y="300" width="18" height="22" />
          ))}
          {[600, 652, 740, 792, 926, 1062].map((x) => (
            <rect key={x} x={x} y="238" width="20" height="22" />
          ))}
          {[1519, 1647, 1757, 2161, 2260, 2390].map((x) => (
            <rect key={x} x={x} y="300" width="66" height="30" />
          ))}
        </g>
        <g fill="#ddd">
          <rect x="200" y="240" width="150" height="16" />
          <rect x="1174" y="240" width="90" height="16" />
        </g>
        <rect x="1534" y="230" width="56" height="44" fill="#7a2226" />
        <rect x="1649" y="230" width="56" height="44" fill="#2c5f8c" />
        <rect x="1749" y="230" width="56" height="44" fill="#2c5f8c" />
        <rect x="1885" y="222" width="32" height="28" fill="#2c5f8c" />
        <rect x="1885" y="266" width="32" height="28" fill="#2c5f8c" />
        <rect x="1885" y="310" width="32" height="28" fill="#2c5f8c" />
        <rect x="2395" y="222" width="64" height="60" fill="#6e6e6e" />
        <rect x="2155" y="154" width="190" height="48" fill="#484848" />
        <rect x="2365" y="154" width="132" height="48" fill="#565656" />
        <rect x="512" y="318" width="32" height="10" fill="#b8b52a" />
        <rect x="588" y="318" width="32" height="10" fill="#a70b12" />
        <rect y="356" width="2518" height="52" fill="#242424" />
        <rect x="319" y="364" width="2170" height="38" fill="#383838" />
        <rect y="408" width="2518" height="6" fill="#ddd" />
        <rect y="414" width="2518" height="44" fill="#111" />
        <rect x="1170" y="414" width="106" height="44" fill="#666" />
        <rect y="458" width="2518" height="1076" fill="#fff" />
        {COLUMNS.map((col, i) => (
          <g key={col}>
            <rect x={50 + i * 106} y="428" width="12" height="16" fill="#fff" />
            <rect x={108 + i * 106} y="458" width="4" height="1076" fill="#ececec" />
          </g>
        ))}
        {ROWS.slice(0, 36).map((_, r) => (
          <g key={r} fill="#8a8a8a">
            <rect x="66" y={474 + r * 30} width="36" height="15" />
            <rect x="186" y={474 + r * 30} width="62" height="15" />
            {[410, 516, 622, 728, 834, 940, 1046].map((x, i) => (
              <rect key={x} x={x} y={474 + r * 30} width={(r + i * 3) % 5 ? 10 : 20} height="15" />
            ))}
          </g>
        ))}
        <rect y="1534" width="2518" height="66" fill="#303030" />
        <rect x="422" y="1530" width="156" height="48" fill="#fff" />
        <g fill="#777">
          <rect x="113" y="1552" width="112" height="14" />
          <rect x="292" y="1552" width="95" height="14" />
          <rect x="612" y="1552" width="96" height="14" />
        </g>
        <rect x="468" y="1550" width="62" height="14" fill="#2b8150" />
      </svg>
    </button>
  );
}

export default function App() {
  return (
    <div className="relative flex h-screen flex-col overflow-hidden bg-[#2a1078] font-[Inter,sans-serif]">
      <Wallpaper />
      <DesktopLabels />
      <div className="relative">
        <MenuBar />
      </div>
      <main className="relative mt-[33px] mr-10 flex min-h-0 flex-1 flex-col overflow-hidden rounded-tr-[20px] border-t-[3px] border-r-2 border-t-[#5f5f60] border-r-[#2a2a2c] bg-[#2d2d2d] shadow-[0_0_30px_rgba(0,0,0,0.5)]">
        <TitleBar />
        <RibbonTabs />
        <Ribbon />
        <FormulaBar />
        <div className="h-1.5 border-y-2 border-[#a9a9a9] bg-white" />
        <Sheet />
        <SheetTabs />
        <StatusBar />
      </main>
      <CaptureThumbnail />
    </div>
  );
}
